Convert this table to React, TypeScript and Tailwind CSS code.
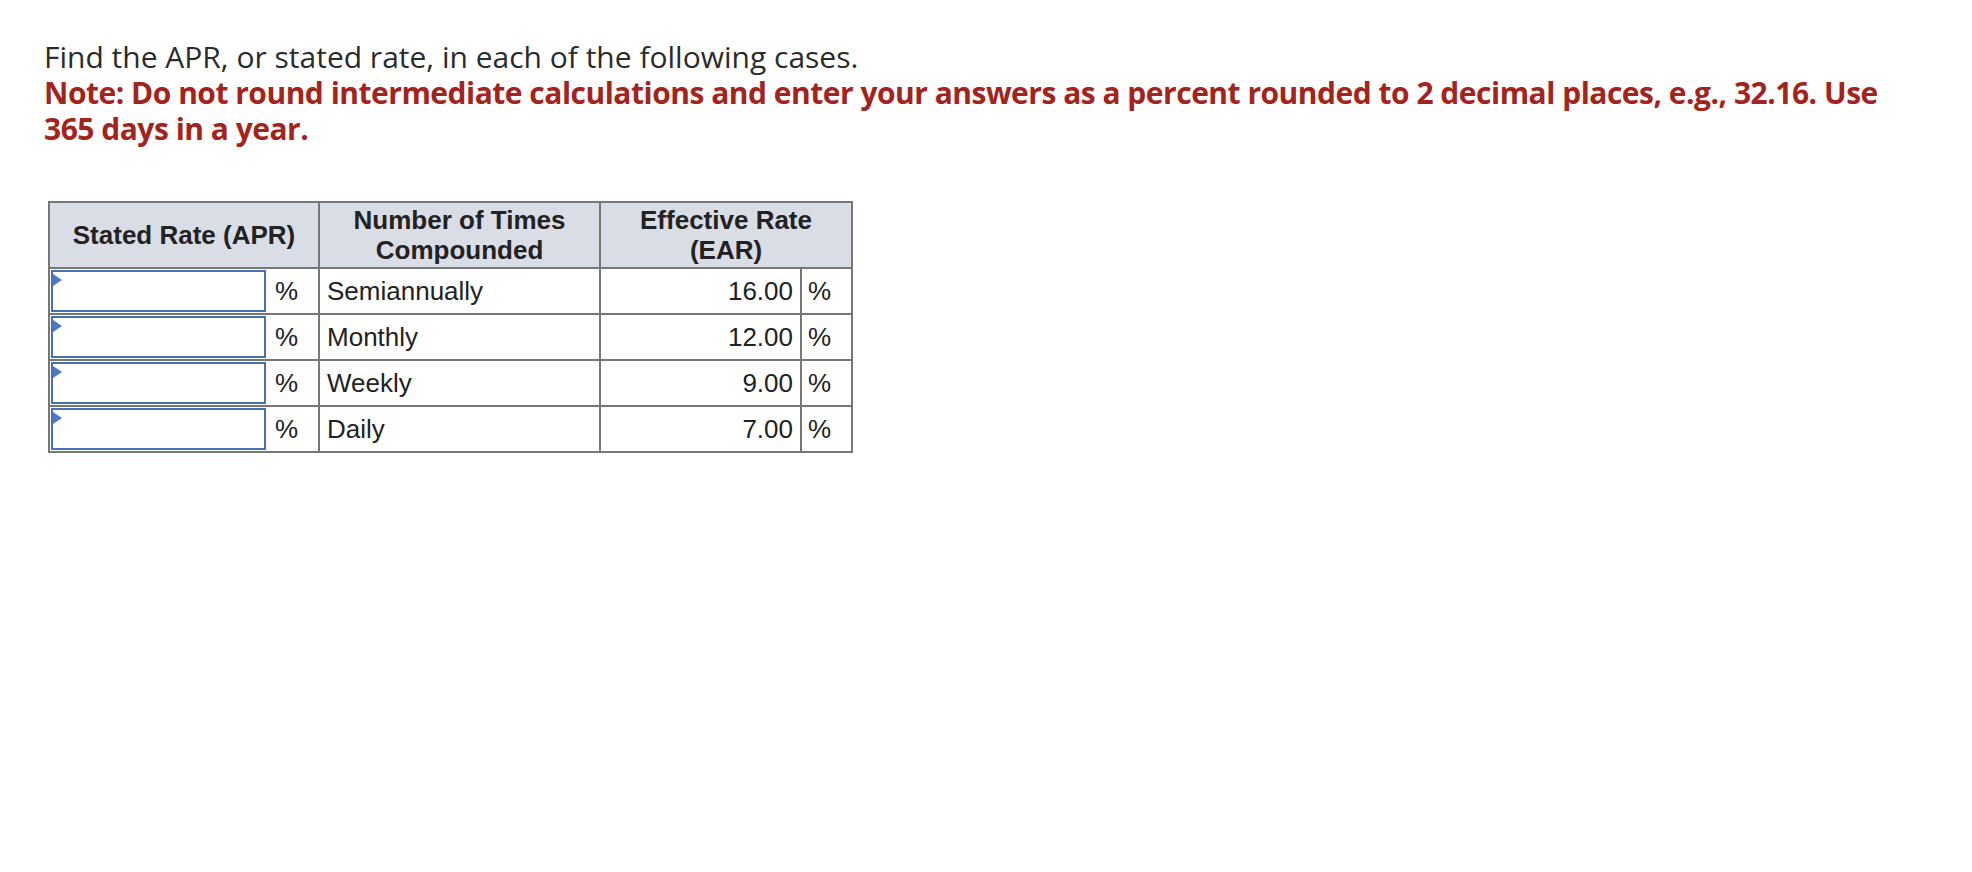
import React from 'react';

const rows = [
  { freq: 'Semiannually', ear: '16.00' },
  { freq: 'Monthly', ear: '12.00' },
  { freq: 'Weekly', ear: '9.00' },
  { freq: 'Daily', ear: '7.00' },
];

function RateInput() {
  return (
    <div className="relative h-[42px] border-2 border-[#4870b4] bg-white">
      {/* little marker in the corner */}
      <svg className="absolute left-0 top-[2px] w-[9px] h-[12px]" viewBox="0 0 9 12">
        <polygon points="0,0 9,6 0,12" fill="#4a7bc8" />
      </svg>
      <input type="text" className="w-full h-full bg-transparent outline-none px-2" aria-label="Stated rate" />
    </div>
  );
}

export default function App() {
  return (
    <div className="min-h-screen bg-white pl-[44px] pt-[39px]">
      <div className="font-['Open_Sans',sans-serif] text-[30px] leading-[36px]">
        <p className="text-[#2b2b2b]">Find the APR, or stated rate, in each of the following cases.</p>
        <p className="font-bold text-[#a3231d] whitespace-nowrap tracking-[-0.5px]">
          Note: Do not round intermediate calculations and enter your answers as a percent rounded to 2 decimal places, e.g., 32.16. Use
          <br />
          365 days in a year.
        </p>
      </div>

      <table className="mt-[54px] ml-[4px] w-[805px] table-fixed border-collapse border-2 border-[#777] font-['Liberation_Sans',Arial,sans-serif] text-[26px] text-[#222]">
        <colgroup>
          <col className="w-[218px]" />
          <col className="w-[52px]" />
          <col className="w-[281px]" />
          <col className="w-[201px]" />
          <col className="w-[51px]" />
        </colgroup>
        <thead>
          <tr className="h-[66px] bg-[#d9dde6] font-bold leading-[30px]">
            <th colSpan={2} className="border-2 border-[#777] text-center align-middle">
              Stated Rate (APR)
            </th>
            <th className="border-2 border-[#777] text-center align-middle">
              Number of Times
              <br />
              Compounded
            </th>
            <th colSpan={2} className="border-2 border-[#777] text-center align-middle">
              Effective Rate
              <br />
              (EAR)
            </th>
          </tr>
        </thead>
        <tbody>
          {rows.map((r) => (
            <tr key={r.freq} className="h-[46px]">
              <td className="border-2 border-r-0 border-[#777] p-[1px] align-middle">
                <RateInput />
              </td>
              <td className="border-2 border-l-0 border-[#777] pl-[8px] align-middle">%</td>
              <td className="border-2 border-[#777] pl-[7px] align-middle">{r.freq}</td>
              <td className="border-2 border-[#777] pr-[7px] text-right align-middle">{r.ear}</td>
              <td className="border-2 border-[#777] pl-[6px] align-middle">%</td>
            </tr>
          ))}
        </tbody>
      </table>
    </div>
  );
}
